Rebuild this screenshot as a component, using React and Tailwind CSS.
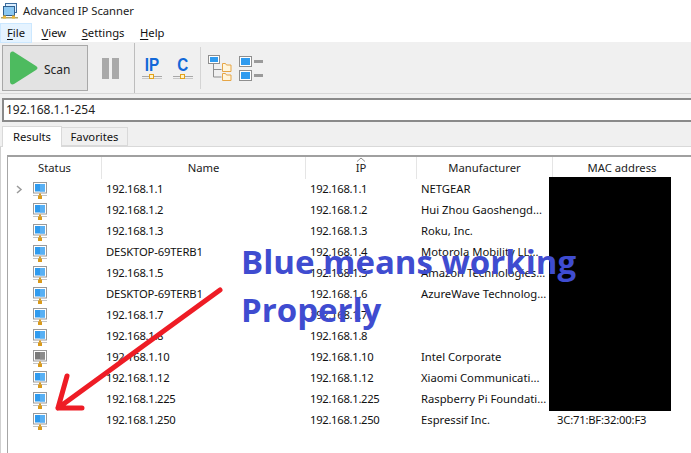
import React from 'react';

const hosts = [
  { name: '192.168.1.1', ip: '192.168.1.1', maker: 'NETGEAR', expand: true },
  { name: '192.168.1.2', ip: '192.168.1.2', maker: 'Hui Zhou Gaoshengd...' },
  { name: '192.168.1.3', ip: '192.168.1.3', maker: 'Roku, Inc.' },
  { name: 'DESKTOP-69TERB1', ip: '192.168.1.4', maker: 'Motorola Mobility LL...' },
  { name: '192.168.1.5', ip: '192.168.1.5', maker: 'Amazon Technologies...' },
  { name: 'DESKTOP-69TERB1', ip: '192.168.1.6', maker: 'AzureWave Technolog...' },
  { name: '192.168.1.7', ip: '192.168.1.7', maker: '' },
  { name: '192.168.1.8', ip: '192.168.1.8', maker: '' },
  { name: '192.168.1.10', ip: '192.168.1.10', maker: 'Intel Corporate', off: true },
  { name: '192.168.1.12', ip: '192.168.1.12', maker: 'Xiaomi Communicati...' },
  { name: '192.168.1.225', ip: '192.168.1.225', maker: 'Raspberry Pi Foundati...' },
  { name: '192.168.1.250', ip: '192.168.1.250', maker: 'Espressif Inc.', mac: '3C:71:BF:32:00:F3' },
];

function HostIcon({ off }) {
  return (
    <svg width="16" height="20" viewBox="0 0 16 20" className="block">
      <rect x="1.500" y="2.500" width="13" height="10.500" fill="#fff" stroke="#9a9a9a" />
      <rect x="3" y="4" width="10" height="7.500" fill={off ? '#7a7a7a' : '#2f9bef'} />
      <rect x="8" y="4" width="5" height="7.500" fill={off ? '#8c8c8c' : '#58b0f4'} />
      <rect x="1" y="15" width="14" height="1" fill="#c4c4c4" />
      <rect x="7" y="13.500" width="2" height="2" fill="#d99a1c" />
      <rect x="6" y="15.500" width="4" height="3.500" fill="#d99a1c" />
    </svg>
  );
}

function AdapterIcon({ label }) {
  return (
    <div className="flex w-[20px] flex-col items-center">
      <span className="origin-center scale-x-[0.8] font-['Liberation_Sans',sans-serif] text-[19px] leading-[17px] font-bold text-[#1268d8]">{label}</span>
      <svg width="20" height="8" viewBox="0 0 20 8" className="block">
        <rect x="0" y="3" width="20" height="1" fill="#a8a8a8" />
        <rect x="0" y="5" width="20" height="1" fill="#c8c8c8" />
        <rect x="7.500" y="1.500" width="4" height="4" fill="#fff3c8" stroke="#e3a21a" />
      </svg>
    </div>
  );
}

function ScreenBox() {
  return (
    <span className="block h-[11px] w-[13px] border border-[#8e8e8e] bg-white p-px">
      <span className="block h-full w-full bg-[#2f9bef]" />
    </span>
  );
}

function TreeIcon() {
  return (
    <svg width="24" height="26" viewBox="0 0 24 26" className="block">
      <rect x="0.500" y="0.500" width="11" height="8" fill="#fff" stroke="#8e8e8e" />
      <rect x="2" y="2" width="8" height="5" fill="#2f9bef" />
      <path d="M5.500 9v13h8M5.500 14.500h8" fill="none" stroke="#8e8e8e" strokeWidth="1" />
      <path d="M14.500 8.500h3l1 1.500h4.500v6.500h-8.500z" fill="#fff5dc" stroke="#e6a545" />
      <path d="M14.500 18.500h3l1 1.500h4.500v5.500h-8.500z" fill="#fff5dc" stroke="#e6a545" />
    </svg>
  );
}

function ListIcon() {
  return (
    <div className="flex flex-col gap-[3px]">
      {[0, 1].map((i) => (
        <div key={i} className="flex items-center gap-[2px]">
          <ScreenBox />
          <span className="h-[3px] w-[9px] bg-[#9a9a9a]" />
        </div>
      ))}
    </div>
  );
}

function MenuItem({ hot, rest, active }) {
  return (
    <div className={`flex h-[20px] items-center px-[6px] ${active ? 'border border-[#cce8ff] bg-[#e5f3ff]' : ''}`}>
      <span><span className="underline underline-offset-2">{hot}</span>{rest}</span>
    </div>
  );
}

export default function App() {
  return (
    <div className="relative flex h-[453px] w-[691px] flex-col overflow-hidden bg-white font-['Noto_Sans',sans-serif] text-[11.25px] text-[#111]">
      {/* title bar */}
      <div className="flex h-[22px] items-center gap-[5px] pl-[1px]">
        <svg width="17" height="18" viewBox="0 0 17 18" className="block">
          <rect x="4.500" y="1.500" width="11" height="9" fill="#dbeeff" stroke="#3d6d9e" />
          <rect x="2.500" y="4.500" width="11" height="9" fill="#8cc8f2" stroke="#30608f" />
          <rect x="0" y="15" width="17" height="1.500" fill="#b0a56a" />
          <rect x="2" y="13.500" width="3" height="3" fill="#e8b53a" />
          <rect x="11" y="13.500" width="3" height="3" fill="#e8b53a" />
        </svg>
        <span className="text-[#222]">Advanced IP Scanner</span>
      </div>

      {/* menu */}
      <div className="flex h-[21px] items-center gap-[3.5px] border-b border-[#f0f0f0] pt-[2px]">
        <MenuItem hot="F" rest="ile" active />
        <MenuItem hot="V" rest="iew" />
        <MenuItem hot="S" rest="ettings" />
        <MenuItem hot="H" rest="elp" />
      </div>

      {/* toolbar */}
      <div className="flex h-[51px] items-center border-b border-[#d8d8d8] bg-[#f0f0f0] pl-[2px]">
        <div className="flex h-[46px] w-[86px] items-center gap-[6px] border border-[#a8a8a8] bg-[#e3e3e3] pl-[5px]">
          <svg width="30" height="34" viewBox="0 0 30 34" className="block">
            <path d="M2 3.500C2 1 4 0 6 1l22 14c2 1 2 3 0 4L6 33c-2 1-4 0-4-2.500z" fill="#4dbb5f" />
          </svg>
          <span className="pt-[3px] text-[12px] text-[#222]">Scan</span>
        </div>
        <div className="ml-[14px] flex gap-[3px]">
          <span className="h-[21px] w-[7px] bg-[#a9a9a9]" />
          <span className="h-[21px] w-[7px] bg-[#a9a9a9]" />
        </div>
        <div className="ml-[15px] h-full w-[1px] bg-[#bdbdbd]" />
        <div className="ml-[7px] flex gap-[11px] pr-[7px]">
          <AdapterIcon label="IP" />
          <AdapterIcon label="C" />
        </div>
        <div className="mr-[7px] h-[42px] w-[1px] bg-[#d4d4d4]" />
        <div className="flex items-center gap-[7px]">
          <TreeIcon />
          <ListIcon />
        </div>
      </div>

      {/* address field */}
      <div className="bg-[#f0f0f0] pt-[4px] pb-[2px] pl-[2px]">
        <div className="flex h-[24px] items-center border-2 border-r-0 border-[#8a8a8a] bg-white pl-[2px] text-[12px] text-[#222]">
          192.168.1.1-254
        </div>
      </div>

      {/* tabs */}
      <div className="flex h-[23px] items-end border-b border-[#d9d9d9] bg-[#f0f0f0] pl-[2px]">
        <div className="relative top-px z-10 flex h-[21px] w-[60px] items-center justify-center border border-b-0 border-[#d9d9d9] bg-white">Results</div>
        <div className="flex h-[19px] w-[66px] items-center justify-center border border-l-0 border-[#d9d9d9] bg-[#f0f0f0] pt-[2px]">Favorites</div>
      </div>

      {/* results table */}
      <div className="flex-1 border-l border-[#d0d0d0] pt-[8px] pl-[6px]">
        <div className="h-full border-t-2 border-l border-[#a6a6a6] border-t-[#a0a0a0]">
          <div className="grid h-[22px] grid-cols-[94px_204px_111px_136px_138px] items-center text-center text-[#222]">
            <div className="flex h-full items-center justify-center border-r border-[#e5e5e5]">Status</div>
            <div className="flex h-full items-center justify-center border-r border-[#e5e5e5]">Name</div>
            <div className="relative flex h-full items-center justify-center border-r border-[#e5e5e5]">
              IP
              <svg width="10" height="5" viewBox="0 0 10 5" className="absolute top-0 left-[50px]">
                <path d="M1 4.500l4-3.500 4 3.500" fill="none" stroke="#8c8c8c" />
              </svg>
            </div>
            <div className="flex h-full items-center justify-center border-r border-[#e5e5e5]">Manufacturer</div>
            <div className="flex h-full items-center justify-center">MAC address</div>
          </div>
          {hosts.map((h) => (
            <div key={h.ip} className="grid h-[21px] grid-cols-[94px_204px_111px_136px_138px] items-center">
              <div className="flex items-center pl-[8px]">
                <span className="w-[16px]">
                  {h.expand && (
                    <svg width="7" height="9" viewBox="0 0 7 9" className="block">
                      <path d="M1 1l4 3.500-4 3.500" fill="none" stroke="#9a9a9a" strokeWidth="1.500" />
                    </svg>
                  )}
                </span>
                <HostIcon off={h.off} />
              </div>
              <div className={`pl-[4px] ${h.name.startsWith('D') ? 'tracking-[-0.15px]' : 'tracking-[-0.3px]'}`}>{h.name}</div>
              <div className="pl-[4px] tracking-[-0.3px]">{h.ip}</div>
              <div className="pl-[4px] whitespace-nowrap">{h.maker}</div>
              <div className="pl-[4px] tracking-[-0.2px]">{h.mac}</div>
            </div>
          ))}
        </div>
      </div>

      {/* redaction over the MAC column */}
      <div className="absolute top-[177px] left-[549px] h-[234px] w-[122px] bg-black" />

      {/* annotation */}
      <div className="absolute top-[238px] left-[241px] font-['Open_Sans',sans-serif] text-[33px] leading-[48px] font-bold whitespace-nowrap text-[#3f4cd0]">
        <div>Blue means working</div>
        <div>Properly</div>
      </div>
      <svg width="691" height="453" viewBox="0 0 691 453" className="absolute top-0 left-0">
        <path d="M220 290L58 408M67 376L58 408H82" fill="none" stroke="#ee1c25" strokeWidth="5" strokeLinecap="round" strokeLinejoin="round" />
      </svg>
    </div>
  );
}
